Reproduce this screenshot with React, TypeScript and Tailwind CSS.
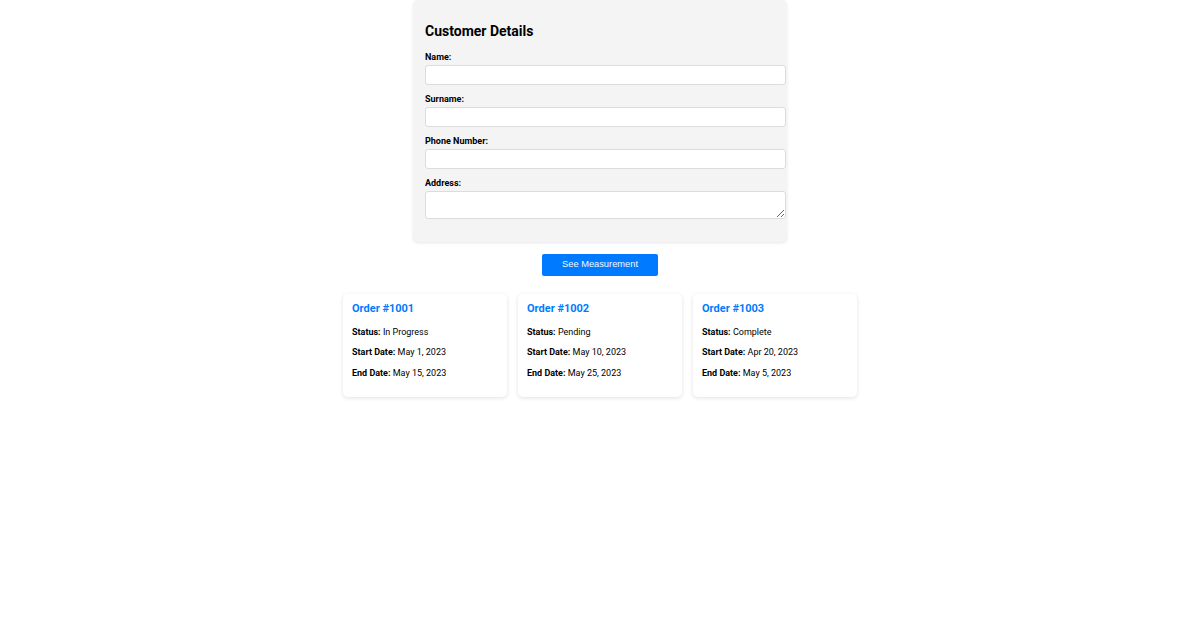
const orders = [
  { id: 1001, status: 'In Progress', start: 'May 1, 2023', end: 'May 15, 2023' },
  { id: 1002, status: 'Pending', start: 'May 10, 2023', end: 'May 25, 2023' },
  { id: 1003, status: 'Complete', start: 'Apr 20, 2023', end: 'May 5, 2023' },
];

const labelClass = 'block text-[9px] leading-[12px] font-bold text-black mb-[2px]';
const inputClass =
  'block w-[361px] h-[20px] bg-white border border-[#dcdcdc] rounded-[3px] mb-[8px] outline-none';

function Field({ label }: { label: string }) {
  return (
    <div>
      <label className={labelClass}>{label}</label>
      <input className={inputClass} />
    </div>
  );
}

export default function App() {
  return (
    <div className="min-h-[630px] bg-white font-['Roboto',sans-serif] text-black flex flex-col items-center">
      {/* Customer form */}
      <div className="w-[374px] bg-[#f4f4f4] rounded-[5px] shadow-[0_1px_3px_rgba(0,0,0,0.1)] pt-[21px] pb-[23px] pl-[12px]">
        <h2 className="text-[14px] leading-[20px] font-bold mb-[10px]">Customer Details</h2>
        <Field label="Name:" />
        <Field label="Surname:" />
        <Field label="Phone Number:" />
        <div>
          <label className={labelClass}>Address:</label>
          <textarea className="block w-[361px] h-[28px] bg-white border border-[#dcdcdc] rounded-[3px] outline-none resize-y" />
        </div>
      </div>

      <button className="mt-[12px] w-[116px] h-[22px] bg-[#007bff] text-[#f4f8ff] text-[9.3px] font-['Liberation_Sans',sans-serif] rounded-[2px]">
        See Measurement
      </button>

      {/* Order cards */}
      <div className="mt-[18px] flex gap-[11px]">
        {orders.map((o) => (
          <div
            key={o.id}
            className="w-[164px] h-[103px] bg-white rounded-[5px] shadow-[0_1px_4px_rgba(0,0,0,0.12)] pt-[8px] px-[9px]"
          >
            <div className="text-[11px] leading-[14px] font-bold text-[#007bff] mb-[10px]">Order #{o.id}</div>
            <p className="text-[9px] leading-[12px] mb-[8px]">
              <span className="font-bold">Status:</span> {o.status}
            </p>
            <p className="text-[9px] leading-[12px] mb-[8.5px]">
              <span className="font-bold">Start Date:</span> {o.start}
            </p>
            <p className="text-[9px] leading-[12px]">
              <span className="font-bold">End Date:</span> {o.end}
            </p>
          </div>
        ))}
      </div>
    </div>
  );
}
